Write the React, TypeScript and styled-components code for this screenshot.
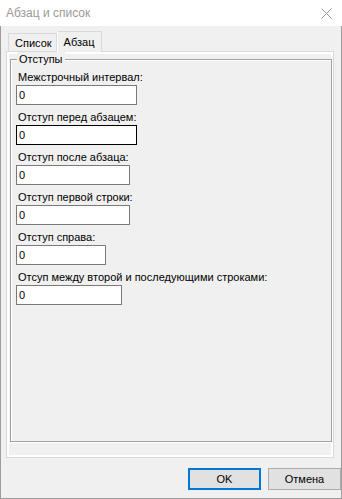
import styled, { createGlobalStyle } from 'styled-components'

const GlobalStyle = createGlobalStyle`
  html, body {
    margin: 0;
    padding: 0;
    background: #ffffff;
  }
  body {
    font-family: 'Liberation Sans', Arial, sans-serif;
    font-size: 11px;
    color: #000;
  }
  * {
    box-sizing: border-box;
  }
`

const Window = styled.div`
  display: flex;
  flex-direction: column;
  width: 342px;
  height: 499px;
`

const TitleBar = styled.div`
  display: flex;
  align-items: center;
  justify-content: space-between;
  height: 26px;
  padding: 0 10px 0 6px;
  background: #ffffff;
  color: #999999;
  font-size: 12px;
`

const Body = styled.div`
  flex: 1;
  display: flex;
  flex-direction: column;
  padding: 5px 0 8px 5px;
  background: #f0f0f0;
  border: 1px solid #9c9c9c;
  border-top: none;
`

const TabBar = styled.div`
  display: flex;
  align-items: flex-end;
  padding-left: 2px;
  margin-bottom: -1px;
`

const Tab = styled.div<{ $active?: boolean }>`
  position: relative;
  z-index: ${({ $active }) => ($active ? 1 : 0)};
  height: ${({ $active }) => ($active ? '21px' : '18px')};
  margin-bottom: ${({ $active }) => ($active ? '0' : '1px')};
  padding: ${({ $active }) => ($active ? '1px 7px 0 6px' : '0 4px 0 6px')};
  line-height: 18px;
  background: #f0f0f0;
  border: 1px solid #d9d9d9;
  border-bottom: none;
  ${({ $active }) => ($active ? 'border-left-color: #ffffff;' : '')}
`

const Panel = styled.div`
  flex: 1;
  display: flex;
  flex-direction: column;
  margin-right: 7px;
  padding: 0 1px 15px 3px;
  border: 1px solid #d9d9d9;
  box-shadow: inset 0 0 0 2px #ffffff;
`

const GroupBox = styled.fieldset`
  flex: 1;
  display: flex;
  flex-direction: column;
  gap: 5px;
  margin: 0;
  min-inline-size: 0;
  padding: 4px 0 0 6px;
  border: 1px solid #a0a0a0;
  box-shadow: 1px 1px 0 #ffffff, inset 1px 1px 0 #ffffff;
`

const GroupTitle = styled.legend`
  padding: 0 2px;
  line-height: 14px;
  background: #f0f0f0;
`

const Field = styled.div`
  display: flex;
  flex-direction: column;
  align-items: flex-start;
  gap: 1px;
`

const FieldLabel = styled.label`
  padding-left: 1px;
  line-height: 14px;
  height: 14px;
  white-space: nowrap;
`

const TextBox = styled.input<{ $width: number; $focused?: boolean }>`
  width: ${({ $width }) => $width}px;
  height: 20px;
  margin: 0 0 0 -1px;
  padding: 0 2px;
  font-family: 'Liberation Sans', Arial, sans-serif;
  font-size: 11px;
  color: #000;
  background: #ffffff;
  border: 1px solid ${({ $focused }) => ($focused ? '#000000' : '#7a7a7a')};
  outline: none;
`

const Footer = styled.div`
  display: flex;
  justify-content: flex-end;
  gap: 7px;
  padding-top: 10px;
`

const Button = styled.button<{ $default?: boolean }>`
  width: 73px;
  height: 22px;
  padding: 0;
  font-family: 'Liberation Sans', Arial, sans-serif;
  font-size: 11px;
  color: #000;
  background: #e1e1e1;
  border: ${({ $default }) => ($default ? '2px solid #0078d7' : '1px solid #adadad')};
`

const fields = [
  { label: 'Межстрочный интервал:', width: 121 },
  { label: 'Отступ перед абзацем:', width: 121, focused: true },
  { label: 'Отступ после абзаца:', width: 114 },
  { label: 'Отступ первой строки:', width: 114 },
  { label: 'Отступ справа:', width: 90 },
  { label: 'Отсуп между второй и последующими строками:', width: 106 },
]

function CloseIcon() {
  return (
    <svg width="11" height="11" viewBox="0 0 11 11">
      <path d="M0.5 0.5 L10.5 10.5 M10.5 0.5 L0.5 10.5" stroke="#999999" strokeWidth="1" fill="none" />
    </svg>
  )
}

export default function App() {
  return (
    <>
      <GlobalStyle />
      <Window>
        <TitleBar>
          <span>Абзац и список</span>
          <CloseIcon />
        </TitleBar>
        <Body>
          <TabBar>
            <Tab>Список</Tab>
            <Tab $active>Абзац</Tab>
          </TabBar>
          <Panel>
            <GroupBox>
              <GroupTitle>Отступы</GroupTitle>
              {fields.map((f) => (
                <Field key={f.label}>
                  <FieldLabel>{f.label}</FieldLabel>
                  <TextBox $width={f.width} $focused={f.focused} defaultValue="0" />
                </Field>
              ))}
            </GroupBox>
          </Panel>
          <Footer>
            <Button $default>OK</Button>
            <Button>Отмена</Button>
          </Footer>
        </Body>
      </Window>
    </>
  )
}
